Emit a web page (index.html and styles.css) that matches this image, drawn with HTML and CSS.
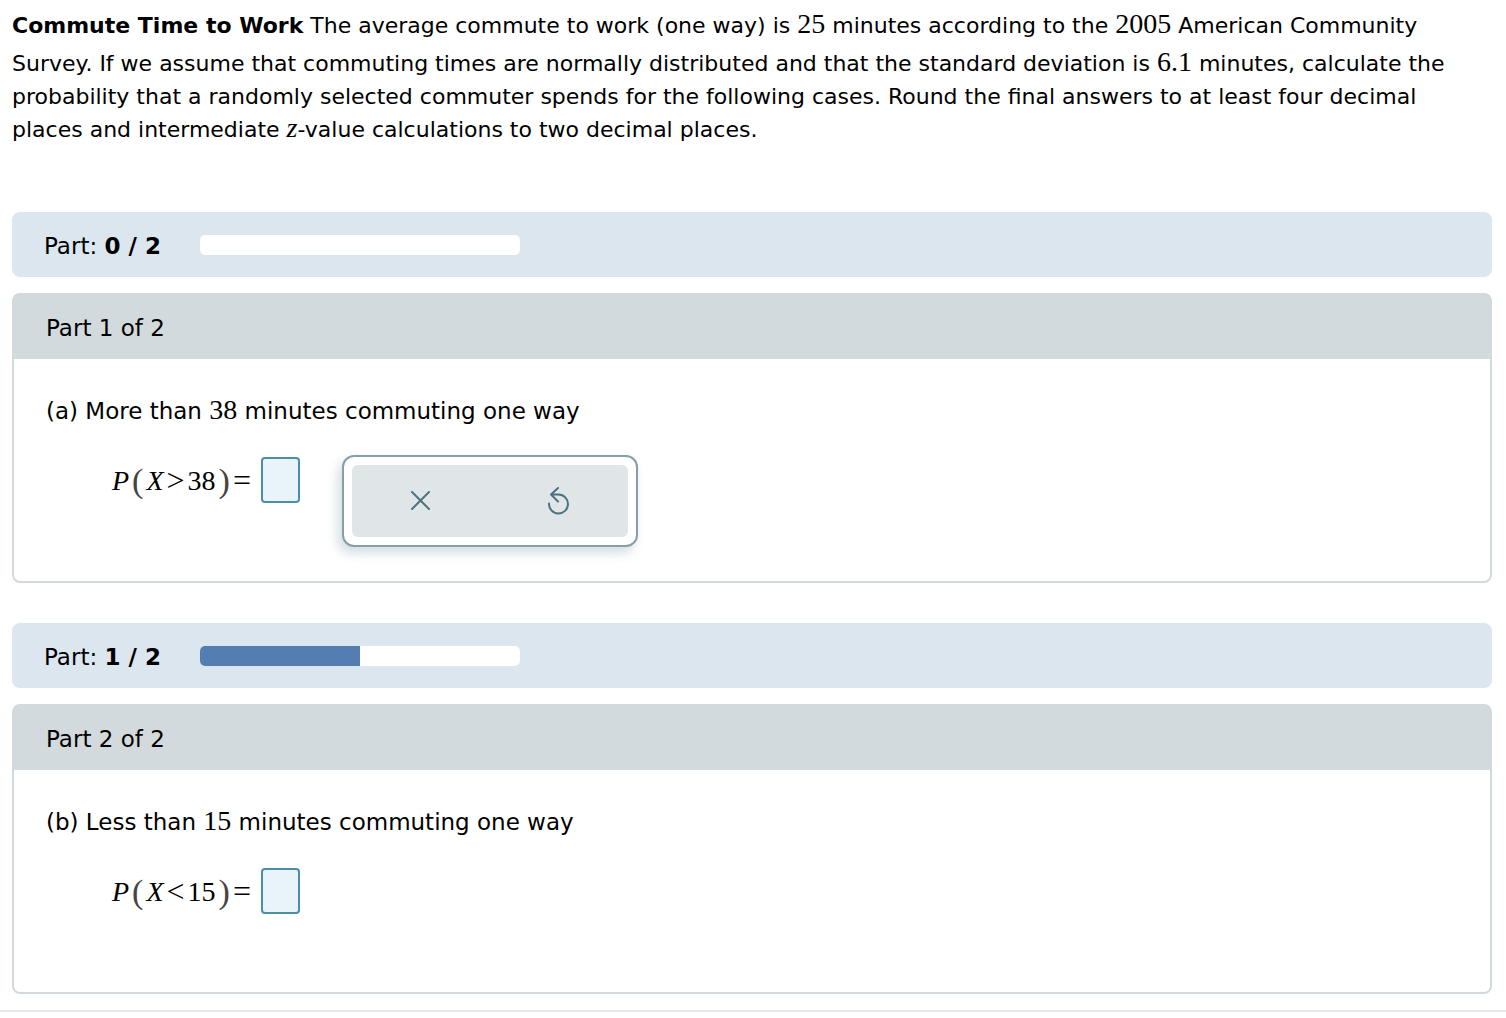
FILE: index.html
```html
<!DOCTYPE html>
<html lang="en">
<head>
  <meta charset="UTF-8">
  <meta name="viewport" content="width=device-width, initial-scale=1.0">
  <title>Commute Time to Work</title>
  <link rel="stylesheet" href="styles.css">
</head>
<body>
  <main class="exercise">
    <p class="question">
      <b>Commute Time to Work</b> The average commute to work (one way) is <span class="num tall">25</span> minutes according to the <span class="num">2005</span> American Community Survey. If we assume that commuting times are normally distributed and that the standard deviation is <span class="num tall">6.1</span> minutes, calculate the probability that a randomly selected commuter spends for the following cases. Round the final answers to at least four decimal<br>
      places and intermediate <i class="num">z</i>-value calculations to two decimal places.
    </p>

    <div class="progress">
      <span class="count">Part: <b>0 / 2</b></span>
      <div class="track"><div class="fill" style="width: 0%"></div></div>
    </div>
    <section class="part">
      <h2>Part 1 of 2</h2>
      <div class="part-body">
        <p>(a) More than <span class="num">38</span> minutes commuting one way</p>
        <div class="answer">
          <label class="math" for="answer-a"><i>P</i><span class="paren">(</span><i>X</i><span class="op">&gt;</span>38<span class="paren">)</span><span class="op">=</span></label>
          <input type="text" id="answer-a" class="box">
          <div class="tools">
            <button type="button" aria-label="Clear">
              <svg width="24" height="24" viewBox="0 0 24 24"><path d="M3 3l17 17M20 3L3 20"/></svg>
            </button>
            <button type="button" aria-label="Undo">
              <svg width="24" height="30" viewBox="0 0 24 30"><path d="M11 2L4 8.500l7 7M4 8.500h7.500a9.500 9.500 0 1 1-9.500 9"/></svg>
            </button>
          </div>
        </div>
      </div>
    </section>

    <div class="progress">
      <span class="count">Part: <b>1 / 2</b></span>
      <div class="track"><div class="fill" style="width: 50%"></div></div>
    </div>
    <section class="part">
      <h2>Part 2 of 2</h2>
      <div class="part-body">
        <p>(b) Less than <span class="num">15</span> minutes commuting one way</p>
        <div class="answer">
          <label class="math" for="answer-b"><i>P</i><span class="paren">(</span><i>X</i><span class="op">&lt;</span>15<span class="paren">)</span><span class="op">=</span></label>
          <input type="text" id="answer-b" class="box">
        </div>
      </div>
    </section>
  </main>
  <hr>
</body>
</html>
```

FILE: styles.css
```css
* {
  box-sizing: border-box;
}
body {
  margin: 0;
  background: #fff;
  color: #000;
  font-family: Verdana, "DejaVu Sans", sans-serif;
  font-size: 23px;
  line-height: 33px;
}
p, h2 {
  margin: 0;
}
.exercise {
  padding: 4px 14px 16px 12px;
}
.question {
  margin-bottom: 66px;
  font-size: 22px;
}
.num {
  font-family: "Liberation Serif", serif;
  font-size: 28px;
  line-height: 1;
}
.tall {
  display: inline-block;
  padding-top: 6px;
}
.progress {
  display: flex;
  align-items: center;
  height: 65px;
  padding: 0 32px;
  margin-bottom: 16px;
  border-radius: 8px;
  background: #dce6ef;
}
.count {
  min-width: 156px;
  padding-top: 4px;
}
.track {
  width: 320px;
  height: 20px;
  border-radius: 5px;
  background: #fff;
  overflow: hidden;
}
.fill {
  height: 100%;
  background: #547eb2;
}
.part {
  border: 2px solid #d3dadd;
  border-radius: 8px;
  margin-bottom: 40px;
}
.part:last-child {
  margin-bottom: 0;
}
.part h2 {
  padding: 17px 32px 14px;
  background: #d3dadd;
  font-size: 23px;
  font-weight: normal;
}
.part-body {
  min-height: 222px;
  padding: 36px 32px 34px;
}
.answer {
  display: flex;
  align-items: flex-start;
  padding: 27px 0 0 66px;
}
.math {
  display: flex;
  align-items: center;
  gap: 3px;
  height: 50px;
  font-family: "Liberation Serif", serif;
  font-size: 28px;
}
.paren {
  color: #444;
  font-size: 34px;
}
.op {
  font-size: 32px;
}
.box {
  width: 39px;
  height: 46px;
  margin: 2px 0 0 10px;
  padding: 0 8px;
  border: 2px solid #4a8fa3;
  border-radius: 4px;
  background: #e8f4fa;
  font: 28px "Liberation Serif", serif;
}
.tools {
  display: flex;
  width: 296px;
  height: 92px;
  margin-left: 42px;
  padding: 8px;
  border: 2px solid #869ea8;
  border-radius: 12px;
  background: #fff;
  box-shadow: -4px 6px 12px #d3dde2;
}
.tools button {
  display: flex;
  flex: 1;
  align-items: center;
  justify-content: center;
  padding: 0;
  border: 0;
  background: #e0e5e7;
}
.tools button:first-child {
  border-radius: 6px 0 0 6px;
}
.tools button:last-child {
  border-radius: 0 6px 6px 0;
}
.tools svg {
  fill: none;
  stroke: #4c717f;
  stroke-width: 2;
  stroke-linecap: round;
  stroke-linejoin: round;
}
hr {
  height: 2px;
  margin: 0;
  border: 0;
  background: #e4e8ea;
}
```
